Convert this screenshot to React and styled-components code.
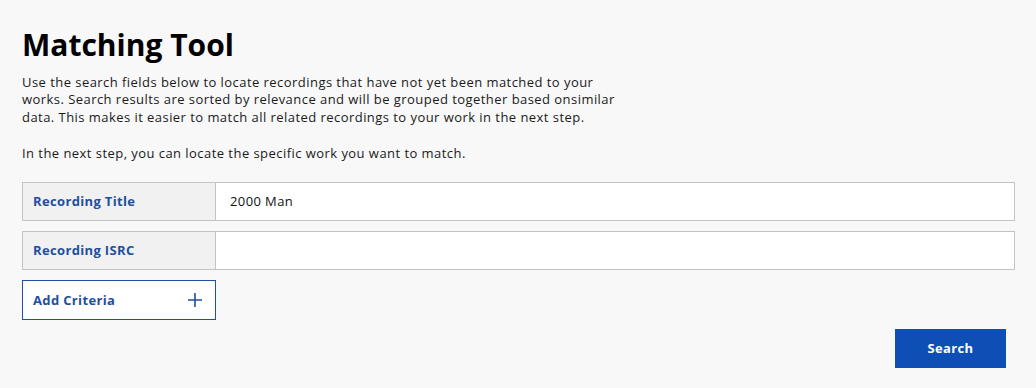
import React from 'react'
import styled, { createGlobalStyle } from 'styled-components'

const GlobalStyle = createGlobalStyle`
  html, body {
    margin: 0;
    padding: 0;
    background: #f8f8f8;
  }
  * { box-sizing: border-box; }
`

const Page = styled.div`
  width: 1036px;
  height: 388px;
  padding: 27px 21px 0 22px;
  font-family: "Open Sans", "DejaVu Sans", sans-serif;
  color: #1a1a1a;
`

const Title = styled.h1`
  margin: 0 0 11px;
  font-size: 30px;
  font-weight: 700;
  line-height: 36px;
  color: #000;
`

const Intro = styled.p`
  margin: 0;
  width: 602px;
  font-size: 13px;
  line-height: 17.4px;
  letter-spacing: 0.45px;
  & + & {
    margin-top: 19px;
  }
`

const Fields = styled.div`
  margin-top: 19px;
  display: flex;
  flex-direction: column;
  gap: 10px;
`

const FieldRow = styled.div`
  display: grid;
  grid-template-columns: 193px 1fr;
  height: 39px;
  border: 1px solid #c3c3c3;
  background: #fff;
`

const Label = styled.div`
  display: flex;
  align-items: center;
  padding-left: 10px;
  background: #f1f1f1;
  border-right: 1px solid #c3c3c3;
  color: #1f4f9e;
  font-size: 13px;
  font-weight: 700;
  letter-spacing: 0.35px;
`

const Value = styled.div`
  display: flex;
  align-items: center;
  padding-left: 14px;
  font-size: 13px;
  letter-spacing: 0.4px;
  color: #111;
`

const AddButton = styled.button`
  width: 194px;
  height: 40px;
  display: flex;
  align-items: center;
  justify-content: space-between;
  padding: 0 12px 0 10px;
  border: 1px solid #1f4f9e;
  background: #fff;
  color: #1f4f9e;
  font-family: inherit;
  font-size: 13px;
  font-weight: 700;
  letter-spacing: 0.35px;
  cursor: pointer;
`

const Actions = styled.div`
  display: flex;
  justify-content: flex-end;
  padding-right: 9px;
  margin-top: 9px;
`

const SearchButton = styled.button`
  width: 111px;
  height: 39px;
  border: 0;
  background: #0d4fb5;
  color: #fff;
  font-family: inherit;
  font-size: 13px;
  font-weight: 700;
  letter-spacing: 0.35px;
  cursor: pointer;
`

const fields = [
  { label: 'Recording Title', value: '2000 Man' },
  { label: 'Recording ISRC', value: '' },
]

function App() {
  return (
    <Page>
      <GlobalStyle />
      <Title>Matching Tool</Title>
      <Intro>
        Use the search fields below to locate recordings that have not yet been matched to your
        works. Search results are sorted by relevance and will be grouped together based onsimilar
        data. This makes it easier to match all related recordings to your work in the next step.
      </Intro>
      <Intro>In the next step, you can locate the specific work you want to match.</Intro>
      <Fields>
        {fields.map((f) => (
          <FieldRow key={f.label}>
            <Label>{f.label}</Label>
            <Value>{f.value}</Value>
          </FieldRow>
        ))}
        <AddButton>
          Add Criteria
          <svg width="16" height="16" viewBox="0 0 16 16">
            <path d="M8 1v14M1 8h14" stroke="#1f4f9e" strokeWidth="1.6" fill="none" />
          </svg>
        </AddButton>
      </Fields>
      <Actions>
        <SearchButton>Search</SearchButton>
      </Actions>
    </Page>
  )
}

export default App
